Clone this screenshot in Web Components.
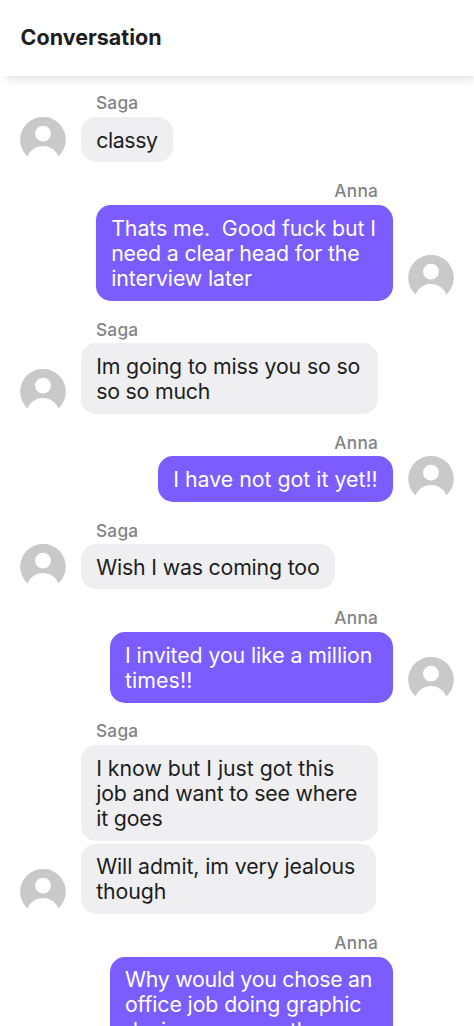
<!DOCTYPE html>
<html lang="en"><head><meta charset="utf-8"><title>Conversation</title>
<style>html,body{margin:0;height:100%;overflow:hidden;background:#fff}body{font-family:Inter,"Liberation Sans",sans-serif}</style></head>
<body>
<chat-app>
<message-group name="Saga"><chat-bubble w="92"><text-line w="61.5">classy</text-line></chat-bubble></message-group>
<message-group name="Anna" own><chat-bubble w="297"><text-line w="264.7">Thats me.  Good fuck but I</text-line><text-line w="248.3">need a clear head for the</text-line><text-line w="140.7">interview later</text-line></chat-bubble></message-group>
<message-group name="Saga"><chat-bubble w="297"><text-line w="264">Im going to miss you so so</text-line><text-line w="114">so so much</text-line></chat-bubble></message-group>
<message-group name="Anna" own><chat-bubble w="235"><text-line w="204.5">I have not got it yet!!</text-line></chat-bubble></message-group>
<message-group name="Saga"><chat-bubble w="253.5"><text-line w="223.3">Wish I was coming too</text-line></chat-bubble></message-group>
<message-group name="Anna" own><chat-bubble w="283.3"><text-line w="247.3">I invited you like a million</text-line><text-line w="67.5">times!!</text-line></chat-bubble></message-group>
<message-group name="Saga"><chat-bubble w="297"><text-line w="238">I know but I just got this</text-line><text-line w="261">job and want to see where</text-line><text-line w="66.5">it goes</text-line></chat-bubble><chat-bubble w="295"><text-line w="259">Will admit, im very jealous</text-line><text-line w="70">though</text-line></chat-bubble></message-group>
<message-group name="Anna" own class="last"><chat-bubble w="283.3" style="height:122px"><text-line w="247.3">Why would you chose an</text-line><text-line w="236.5">office job doing graphic</text-line><text-line w="209">designs anyway then</text-line></chat-bubble></message-group>
</chat-app>
<script>
const define=(name,html,setup)=>customElements.define(name,class extends HTMLElement{
  constructor(){super();this.attachShadow({mode:'open'}).innerHTML=html;}
  connectedCallback(){if(setup)setup(this,this.shadowRoot);}
});
define('chat-app',`<style>
:host{display:block;height:1026px;overflow:hidden;background:#fff}
header{height:76px;box-sizing:border-box;padding:23px 20.5px 0;background:#fff;position:relative;z-index:1;box-shadow:4px 5px 9px -2px #0000001f}
h1{margin:0;font-size:21.5px;line-height:28px;font-weight:700;color:#1c1e21;letter-spacing:.02px}
main{padding:13.4px 20px 0;display:flex;flex-direction:column;gap:14.9px}
</style><header><h1>Conversation</h1></header><main><slot></slot></main>`);
define('user-avatar',`<style>:host{display:block;width:46px;height:45.28px;flex:none}svg{display:block}</style>
<svg width="46" height="45.28" viewBox="0 0 46 45.28"><path fill="#c9c9c9" fill-rule="evenodd" d="M7.7 39.6A22.8 22.8 0 1 1 38.3 39.6C36.2 33.2 30.3 29 23 29S9.8 33.2 7.7 39.6ZM23 8.8a7.9 7.9 0 1 0 0 15.8a7.9 7.9 0 1 0 0-15.8Z"/></svg>`);
define('message-group',`<style>
:host{display:block}
.name{height:27.7px;line-height:27.2px;padding:0 76px;font-size:17.3px;font-weight:500;color:#838387;letter-spacing:.2px}
.row{display:flex;align-items:flex-end;gap:15px}
.stack{display:flex;flex-direction:column;gap:2.6px;align-items:flex-start}
:host([own]) .name{text-align:right}
:host([own]) .row{flex-direction:row-reverse}
:host([own]) .stack{align-items:flex-end;--bubble:#7b5cff;--ink:#fff}
</style><div class="name"></div><div class="row"><user-avatar></user-avatar><div class="stack"><slot></slot></div></div>`,
(el,r)=>{r.querySelector('.name').textContent=el.getAttribute('name')});
define('chat-bubble',`<style>
:host{display:block;box-sizing:border-box;padding:10.6px 15.2px 9.4px;border-radius:15px;background:var(--bubble,#efeff1);color:var(--ink,#1c1e21)}
</style><slot></slot>`,el=>{el.style.width=el.getAttribute('w')+'px'});
// Spreads the letters so that the line fills its given width.
define('text-line',`<style>
:host{display:block;height:25.28px;line-height:25.28px;font-size:21.3px;white-space:pre}
</style><span><slot></slot></span>`,(el,r)=>{
  const s=r.querySelector('span'),n=el.textContent.length;
  s.style.letterSpacing=((el.getAttribute('w')-s.getBoundingClientRect().width)/n)+'px';
});
</script></body></html>
